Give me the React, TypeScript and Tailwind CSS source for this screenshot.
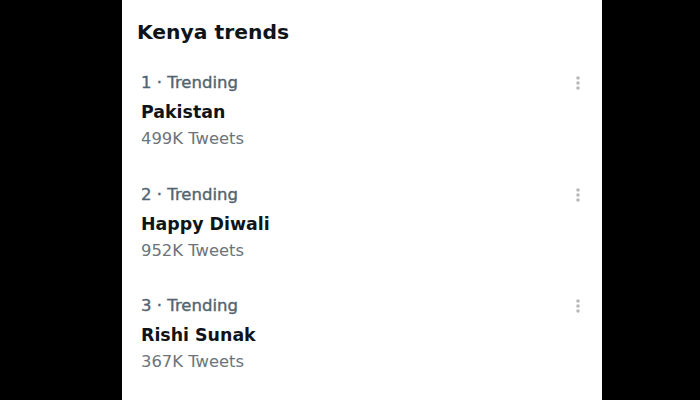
import React from "react";

const trends = [
  { rank: 1, name: "Pakistan", count: "499K Tweets" },
  { rank: 2, name: "Happy Diwali", count: "952K Tweets" },
  { rank: 3, name: "Rishi Sunak", count: "367K Tweets" },
];

function Dots() {
  return (
    <svg width="8" height="16" viewBox="0 0 8 16" className="mt-[2px]">
      <circle cx="4" cy="3" r="1.8" fill="#b9b9b9" />
      <circle cx="4" cy="8" r="1.8" fill="#b9b9b9" />
      <circle cx="4" cy="13" r="1.8" fill="#b9b9b9" />
    </svg>
  );
}

export default function App() {
  return (
    <div className="w-[700px] h-[400px] bg-black flex pl-[122px] overflow-hidden">
      <div
        className="w-[480px] h-full bg-white"
        style={{ fontFamily: '"DejaVu Sans", sans-serif' }}
      >
        <div className="pt-[20px] pb-[11.5px] pl-[15px]">
          <h2 className="text-[20.3px] leading-[24px] font-bold text-[#0f1419]">Kenya trends</h2>
        </div>
        {trends.map((t) => (
          <div key={t.rank} className="h-[111.5px] pt-[17.5px] pl-[19px] pr-[20px] flex justify-between">
            <div className="flex flex-col">
              <div className="text-[16.5px] leading-[20px] text-[#536471] [-webkit-text-stroke:0.4px_#536471]">
                {t.rank} · Trending
              </div>
              <div className="mt-[8px] text-[17.4px] leading-[22px] font-bold text-[#0f1419]">{t.name}</div>
              <div className="mt-[6px] text-[16.4px] leading-[20px] text-[#6b747c]">{t.count}</div>
            </div>
            <Dots />
          </div>
        ))}
      </div>
    </div>
  );
}
